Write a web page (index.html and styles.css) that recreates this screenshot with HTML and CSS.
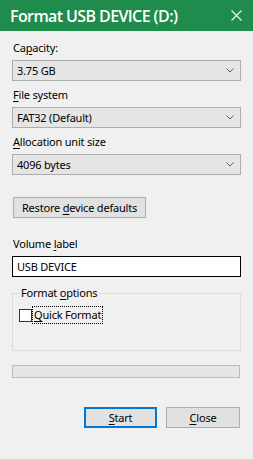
FILE: index.html
```html
<!DOCTYPE html>
<html lang="en">
  <head>
    <meta charset="UTF-8" />
    <title>Format USB DEVICE (D:)</title>
    <link rel="stylesheet" href="styles.css">
  </head>
  <body>
    <div class="titlebar">
      <span class="title">Format USB DEVICE (D:)</span>
      <svg class="close-x" width="11" height="11" viewBox="0 0 11 11">
        <path d="M0.5 0.5 L10.5 10.5 M10.5 0.5 L0.5 10.5" stroke="#e8f4ec" stroke-width="1.2" fill="none" />
      </svg>
    </div>

    <div class="content">
      <div class="label first">Ca<u>p</u>acity:</div>
      <div class="combo">
        <span>3.75 GB</span>
        <svg width="8" height="5" viewBox="0 0 8 5"><polyline points="0.5,0.5 4,4 7.5,0.5" stroke="#606060" fill="none" /></svg>
      </div>

      <div class="label"><u>F</u>ile system</div>
      <div class="combo">
        <span>FAT32 (Default)</span>
        <svg width="8" height="5" viewBox="0 0 8 5"><polyline points="0.5,0.5 4,4 7.5,0.5" stroke="#606060" fill="none" /></svg>
      </div>

      <div class="label"><u>A</u>llocation unit size</div>
      <div class="combo">
        <span>4096 bytes</span>
        <svg width="8" height="5" viewBox="0 0 8 5"><polyline points="0.5,0.5 4,4 7.5,0.5" stroke="#606060" fill="none" /></svg>
      </div>

      <button class="btn restore">Restore <u>d</u>evice defaults</button>

      <div class="label volume">Volume <u>l</u>abel</div>
      <div class="textbox">USB DEVICE</div>

      <div class="group">
        <span class="legend">Format <u>o</u>ptions</span>
        <div class="check-row">
          <span class="checkbox"></span>
          <span class="check-text"><u>Q</u>uick Format</span>
        </div>
      </div>

      <div class="progress"></div>

      <div class="actions">
        <button class="btn start"><u>S</u>tart</button>
        <button class="btn close"><u>C</u>lose</button>
      </div>
    </div>
  </body>
</html>
```

FILE: styles.css
```css
body {
  margin: 0;
  width: 253px;
  height: 459px;
  background-color: #f0f0f0;
  font-family: "Noto Sans", "Open Sans", sans-serif;
  font-size: 11px;
  letter-spacing: -0.2px;
  color: #000;
  overflow: hidden;
}

u {
  text-decoration-thickness: 1px;
  text-underline-offset: 2px;
}

.titlebar {
  height: 31px;
  background-color: #1f8b4c;
  display: flex;
  align-items: center;
  justify-content: space-between;
  padding: 0 11px 0 10px;
}

.title {
  color: #fff;
  font-family: "Open Sans", sans-serif;
  font-weight: 600;
  font-size: 16px;
  letter-spacing: -0.6px;
}

.content {
  padding: 0 12px;
}

.label {
  height: 16px;
  line-height: 16px;
  margin-top: 6px;
  margin-bottom: 4px;
  padding-left: 1px;
}

.label.first {
  margin-top: 9px;
}

.combo {
  height: 19px;
  border: 1px solid #adadad;
  background-color: #e5e5e5;
  display: flex;
  align-items: center;
  justify-content: space-between;
  padding: 0 6px 0 4px;
}

.btn {
  font-family: inherit;
  font-size: 11px;
  letter-spacing: -0.2px;
  color: #000;
  height: 21px;
  padding: 0;
  background-color: #e1e1e1;
  border: 1px solid #adadad;
  line-height: 17px;
}

.restore {
  display: block;
  margin: 22px 0 0 1px;
  width: 133px;
}

.label.volume {
  margin-top: 18px;
}

.textbox {
  height: 19px;
  line-height: 19px;
  border: 1px solid #000;
  background-color: #fff;
  padding: 0 4px;
}

.group {
  margin-top: 16px;
  height: 56px;
  border: 1px solid #dcdcdc;
  padding-left: 6px;
}

.legend {
  display: block;
  width: fit-content;
  height: 16px;
  line-height: 16px;
  margin-top: -9px;
  padding: 0 2px;
  background-color: #f0f0f0;
}

.check-row {
  display: flex;
  align-items: center;
  height: 18px;
  margin-top: 5px;
}

.checkbox {
  width: 11px;
  height: 11px;
  border: 1px solid #333;
  background-color: #fff;
}

.check-text {
  margin-left: 1px;
  padding: 0 1px;
  line-height: 16px;
  outline: 1px dotted #000;
}

.progress {
  margin-top: 14px;
  height: 11px;
  border: 1px solid #bcbcbc;
  background-color: #e6e6e6;
  margin-right: 1px;
}

.actions {
  display: flex;
  justify-content: flex-end;
  gap: 9px;
  margin-top: 29px;
  padding-right: 1px;
}

.start {
  width: 73px;
  border: 2px solid #0078d7;
}

.close {
  width: 74px;
}
```
